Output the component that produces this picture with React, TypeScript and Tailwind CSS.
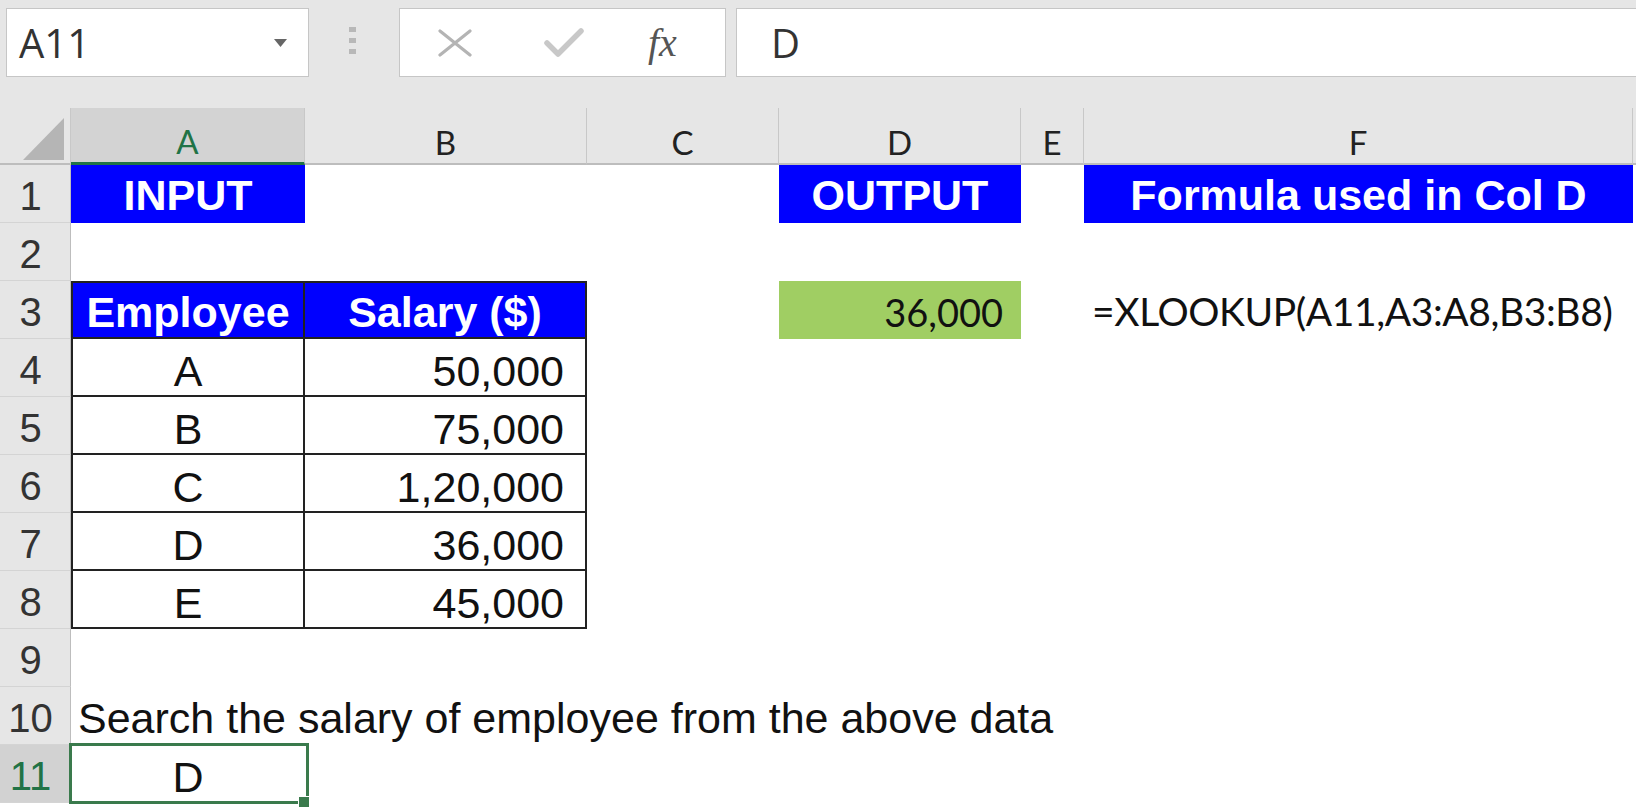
import React from "react";
import clsx from "clsx";

const ARIAL = "font-['Liberation_Sans',Arial,sans-serif]";
const CALIBRI = "font-['Lato','Noto_Sans',sans-serif]";
const UI = "font-['Open_Sans','Noto_Sans',sans-serif]";

const COLS = ["A", "B", "C", "D", "E", "F"];

const DATA = [
  ["A", "50,000"],
  ["B", "75,000"],
  ["C", "1,20,000"],
  ["D", "36,000"],
  ["E", "45,000"],
];

// sheet cell, Arial 43px unless `calibri` is set
function Cell({
  className,
  calibri,
  children,
}: {
  className?: string;
  calibri?: boolean;
  children?: React.ReactNode;
}) {
  return (
    <div
      className={clsx(
        "flex items-end whitespace-nowrap leading-none text-[#111]",
        calibri ? CALIBRI : clsx(ARIAL, "text-[43px]"),
        className
      )}
    >
      {children}
    </div>
  );
}

function RowHead({ n, active }: { n: number; active?: boolean }) {
  return (
    <div
      className={clsx(
        "flex items-end justify-center pr-[9px] pb-[6px] leading-none text-[40px] border-r border-b border-r-[#bdbdbd] border-b-[#d4d4d4]",
        ARIAL,
        active ? "bg-[#d2d2d2] text-[#217346]" : "bg-[#e6e6e6] text-[#333]"
      )}
    >
      {n}
    </div>
  );
}

function Empty({ count }: { count: number }) {
  return (
    <>
      {Array.from({ length: count }).map((_, i) => (
        <div key={i} />
      ))}
    </>
  );
}

function Toolbar() {
  return (
    <div className="flex h-[108px] items-start bg-[#e6e6e6] pl-[6px] pt-[8px]">
      {/* Name box */}
      <div className="flex h-[69px] w-[303px] shrink-0 items-center border border-[#c6c6c6] bg-white pl-[12px]">
        <span className={clsx("text-[40px] leading-none text-[#333]", UI)}>
          A11
        </span>
        <svg
          className="ml-auto mr-[21px]"
          width="13"
          height="8"
          viewBox="0 0 13 8"
        >
          <path d="M0 0 H13 L6.5 8 Z" fill="#666" />
        </svg>
      </div>

      {/* grip dots */}
      <div className="ml-[40px] mt-[19px] flex shrink-0 flex-col gap-[6px]">
        <div className="h-[5px] w-[7px] bg-[#b8b8b8]" />
        <div className="h-[5px] w-[7px] bg-[#b8b8b8]" />
        <div className="h-[5px] w-[7px] bg-[#b8b8b8]" />
      </div>

      {/* cancel / enter / fx */}
      <div className="ml-[43px] flex h-[69px] w-[327px] shrink-0 items-center border border-[#c6c6c6] bg-white pl-[38px]">
        <svg width="34" height="28" viewBox="0 0 34 28">
          <path
            d="M2 2 L32 26 M32 2 L2 26"
            stroke="#b4b4b4"
            strokeWidth="3.2"
            strokeLinecap="round"
            fill="none"
          />
        </svg>
        <svg className="ml-[72px]" width="40" height="30" viewBox="0 0 40 30">
          <path
            d="M3 15 L14 26 L37 3"
            stroke="#c8c8c8"
            strokeWidth="5.5"
            strokeLinecap="round"
            strokeLinejoin="round"
            fill="none"
          />
        </svg>
        <span
          className={clsx(
            "ml-[64px] text-[40px] italic leading-none text-[#555]",
            "font-['Liberation_Serif','DejaVu_Serif',serif]"
          )}
        >
          fx
        </span>
      </div>

      {/* formula bar */}
      <div className="ml-[10px] flex h-[69px] w-[920px] shrink-0 items-center border border-[#c6c6c6] bg-white pl-[34px]">
        <span className={clsx("text-[40px] leading-none text-[#333]", UI)}>
          D
        </span>
      </div>
    </div>
  );
}

export default function App() {
  return (
    <div className="relative h-[810px] w-[1636px] overflow-hidden bg-white">
      <Toolbar />

      <div className="grid grid-cols-[71px_234px_282px_192px_242px_63px_549px_1fr] grid-rows-[57px_repeat(11,58px)]">
        {/* column headers */}
        <div className="relative border-b-2 border-r border-b-[#bdbdbd] border-r-[#c8c8c8] bg-[#e6e6e6]">
          <svg
            className="absolute left-[23px] top-[10px]"
            width="41"
            height="42"
            viewBox="0 0 41 42"
          >
            <path d="M41 0 V42 H0 Z" fill="#b5b5b5" />
          </svg>
        </div>
        {COLS.map((c) => (
          <div
            key={c}
            className={clsx(
              "flex items-end justify-center pb-[4px] text-[33px] leading-none border-r border-r-[#c8c8c8]",
              CALIBRI,
              c === "A"
                ? "border-b-[3px] border-b-[#217346] bg-[#d3d3d3] text-[#217346]"
                : "border-b-2 border-b-[#bdbdbd] bg-[#e6e6e6] text-[#222]"
            )}
          >
            {c}
          </div>
        ))}
        <div className="border-b-2 border-b-[#bdbdbd] bg-[#e6e6e6]" />

        {/* row 1 */}
        <RowHead n={1} />
        <Cell className="justify-center bg-[#0000ff] pb-[6px] font-bold text-white">
          INPUT
        </Cell>
        <Empty count={2} />
        <Cell className="justify-center bg-[#0000ff] pb-[6px] font-bold text-white">
          OUTPUT
        </Cell>
        <div />
        <Cell className="justify-center bg-[#0000ff] pb-[6px] font-bold text-white">
          Formula used in Col D
        </Cell>
        <div />

        {/* row 2 */}
        <RowHead n={2} />
        <Empty count={7} />

        {/* row 3 */}
        <RowHead n={3} />
        <Cell className="justify-center border-2 border-[#222] bg-[#0000ff] pb-[3px] font-bold text-white">
          Employee
        </Cell>
        <Cell className="justify-center border-y-2 border-r-2 border-[#222] bg-[#0000ff] pb-[3px] font-bold text-white">
          Salary ($)
        </Cell>
        <div />
        <Cell
          calibri
          className="justify-end bg-[#a0ce63] pb-[8px] pr-[18px] text-[38px]"
        >
          36,000
        </Cell>
        <div />
        <Cell
          calibri
          className="pb-[8px] pl-[8px] text-[39px] tracking-[-0.4px]"
        >
          =XLOOKUP(A11,A3:A8,B3:B8)
        </Cell>
        <div />

        {/* rows 4-8 */}
        {DATA.map(([emp, sal], i) => (
          <React.Fragment key={emp}>
            <RowHead n={i + 4} />
            <Cell className="justify-center border-x-2 border-b-2 border-[#222] pb-[2px]">
              {emp}
            </Cell>
            <Cell className="justify-end border-r-2 border-b-2 border-[#222] pb-[2px] pr-[21px]">
              {sal}
            </Cell>
            <Empty count={5} />
          </React.Fragment>
        ))}

        {/* row 9 */}
        <RowHead n={9} />
        <Empty count={7} />

        {/* row 10 */}
        <RowHead n={10} />
        <Cell className="pb-[5px] pl-[7px]">
          Search the salary of employee from the above data
        </Cell>
        <Empty count={6} />

        {/* row 11 */}
        <RowHead n={11} active />
        <Cell className="relative justify-center pb-[4px]">
          D
          <div className="pointer-events-none absolute -bottom-[1px] -left-[2px] -right-[4px] -top-[2px] border-[3px] border-[#3a7a4c]" />
          <div className="absolute -bottom-[5px] -right-[5px] h-[12px] w-[12px] border border-white bg-[#3a7a4c]" />
        </Cell>
        <Empty count={6} />
      </div>
    </div>
  );
}
